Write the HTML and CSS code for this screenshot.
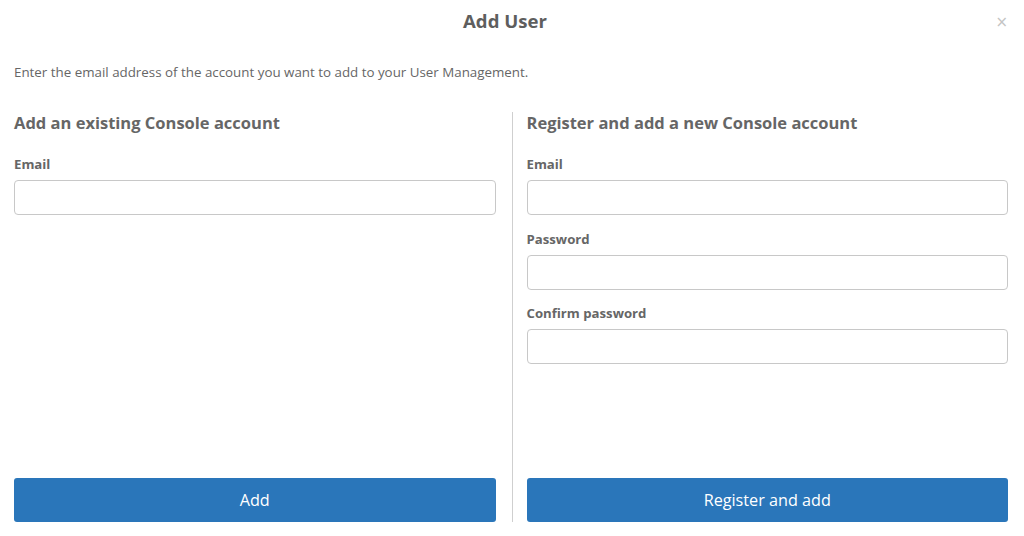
FILE: index.html
```html
<!DOCTYPE html>
<html lang="en">
<head>
<meta charset="utf-8">
<title>Add User</title>
<link rel="stylesheet" href="styles.css">
</head>
<body>
<div class="modal">
  <header class="modal-header">
    <h1 class="modal-title">Add User</h1>
    <button class="close" type="button" aria-label="Close">&times;</button>
  </header>
  <p class="intro">Enter the email address of the account you want to add to your User Management.</p>
  <div class="columns">
    <section class="col col-left">
      <h2 class="col-title">Add an existing Console account</h2>
      <div class="fields">
        <div class="field">
          <label class="label">Email</label>
          <input class="input" type="text">
        </div>
      </div>
      <button class="btn" type="button">Add</button>
    </section>
    <section class="col col-right">
      <h2 class="col-title">Register and add a new Console account</h2>
      <div class="fields">
        <div class="field">
          <label class="label">Email</label>
          <input class="input" type="text">
        </div>
        <div class="field">
          <label class="label">Password</label>
          <input class="input" type="password">
        </div>
        <div class="field">
          <label class="label">Confirm password</label>
          <input class="input" type="password">
        </div>
      </div>
      <button class="btn" type="button">Register and add</button>
    </section>
  </div>
</div>
</body>
</html>
```

FILE: styles.css
```css
* { box-sizing: border-box; }
html, body { margin: 0; padding: 0; background: #fff; }
body {
  font-family: "Open Sans", "Noto Sans", sans-serif;
  color: #666;
  width: 1024px;
  height: 536px;
  overflow: hidden;
}
.modal {
  display: flex;
  flex-direction: column;
  height: 536px;
  padding: 0 16px 14px 14px;
}
.modal-header {
  position: relative;
  padding-top: 9px;
  height: 44px;
}
.modal-title {
  margin: 0;
  text-align: center;
  font-size: 18.6px;
  line-height: 24px;
  font-weight: 700;
  color: #5e5e5e;
  padding-right: 12px;
}
.close {
  position: absolute;
  right: 0;
  top: 12px;
  border: 0;
  background: none;
  padding: 0;
  font-family: "DejaVu Sans", sans-serif;
  font-size: 15px;
  line-height: 20px;
  color: #c4c4c4;
  cursor: pointer;
}
.intro {
  margin: 19px 0 0 0;
  font-size: 13.35px;
  line-height: 18px;
  color: #666;
}
.columns {
  flex: 1;
  display: flex;
  margin-top: 31px;
}
.col {
  flex: 1;
  display: flex;
  flex-direction: column;
}
.col-left { padding-right: 16px; }
.col-right {
  border-left: 1px solid #cfcfcf;
  padding-left: 14px;
}
.col-title {
  margin: 0;
  font-size: 16.5px;
  line-height: 22px;
  font-weight: 700;
  color: #666;
}
.fields {
  flex: 1;
  display: flex;
  flex-direction: column;
  gap: 14.5px;
  margin-top: 21px;
}
.field {
  display: flex;
  flex-direction: column;
}
.label {
  font-size: 13.2px;
  line-height: 18px;
  font-weight: 700;
  color: #666;
  margin-bottom: 7px;
}
.input {
  height: 35px;
  border: 1px solid #c8c8c8;
  border-radius: 4px;
  background: #fff;
  font-family: inherit;
  font-size: 13px;
  padding: 0 10px;
  outline: none;
}
.btn {
  height: 44px;
  border: 0;
  border-radius: 3px;
  background: #2a76ba;
  color: #fff;
  font-family: inherit;
  font-size: 16.2px;
  cursor: pointer;
}
```
